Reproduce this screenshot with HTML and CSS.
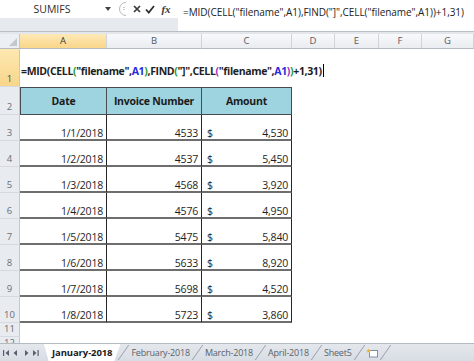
FILE: index.html
```html
<!DOCTYPE html>
<html lang="en">
<head>
    <meta charset="UTF-8">
    <title>January-2018 - Invoices</title>
    <link rel="stylesheet" href="styles.css">
</head>
<body>
<div class="app">

    <!-- formula bar -->
    <div class="formula-bar">
        <div class="fb-left">
            <div class="fb-top">
                <span class="name">SUMIFS</span>
                <svg class="dd" width="6" height="4" viewBox="0 0 6 4"><path d="M0 0H6L3 4Z" fill="#444"/></svg>
                <svg class="grip" width="9" height="16" viewBox="0 0 9 16"><path d="M8 1.5A6.5 6.5 0 0 0 8 14.5" fill="none" stroke="#b3b9c1"/><path d="M5 6.5H7M5 8.5H7" stroke="#c6cbd2"/></svg>
                <svg class="btn-x" width="8" height="8" viewBox="0 0 8 8"><path d="M1 1L7 7M7 1L1 7" stroke="#3a3a3a" stroke-width="1.7"/></svg>
                <svg class="btn-ok" width="10" height="9" viewBox="0 0 10 9"><path d="M1 4.5L3.8 7.5L9 1" fill="none" stroke="#2f2f2f" stroke-width="1.8"/></svg>
                <span class="fx">fx</span>
            </div>
        </div>
        <div class="fb-input">=MID(CELL("filename",A1),FIND("]",CELL("filename",A1))+1,31)</div>
    </div>
    <div class="bar-gap"></div>

    <!-- grid -->
    <div class="sheet">
        <div class="row hdr">
            <div class="corner"><svg width="8" height="8" viewBox="0 0 8 8"><path d="M8 0V8H0Z" fill="#c3c8cf"/></svg></div>
            <div class="ch sel">A</div>
            <div class="ch">B</div>
            <div class="ch">C</div>
            <div class="ch">D</div>
            <div class="ch">E</div>
            <div class="ch">F</div>
            <div class="ch">G</div>
        </div>

        <div class="row r1">
            <div class="rh sel">1</div>
            <div class="edit">=MID(CELL<span class="p2">(</span>"filename",<span class="ref">A1</span><span class="p2">)</span>,FIND<span class="p2">(</span>"]",CELL<span class="p3">(</span>"filename",<span class="ref">A1</span><span class="p3">)</span><span class="p2">)</span>+1,31)<span class="caret"></span></div>
        </div>

        <div class="row r2">
            <div class="rh">2</div>
            <div class="th">Date</div>
            <div class="th">Invoice Number</div>
            <div class="th">Amount</div>
        </div>

        <div class="row data">
            <div class="rh">3</div>
            <div class="td">1/1/2018</div>
            <div class="td">4533</div>
            <div class="td money"><span>$</span><span>4,530</span></div>
        </div>
        <div class="row data">
            <div class="rh">4</div>
            <div class="td">1/2/2018</div>
            <div class="td">4537</div>
            <div class="td money"><span>$</span><span>5,450</span></div>
        </div>
        <div class="row data">
            <div class="rh">5</div>
            <div class="td">1/3/2018</div>
            <div class="td">4568</div>
            <div class="td money"><span>$</span><span>3,920</span></div>
        </div>
        <div class="row data">
            <div class="rh">6</div>
            <div class="td">1/4/2018</div>
            <div class="td">4576</div>
            <div class="td money"><span>$</span><span>4,950</span></div>
        </div>
        <div class="row data">
            <div class="rh">7</div>
            <div class="td">1/5/2018</div>
            <div class="td">5475</div>
            <div class="td money"><span>$</span><span>5,840</span></div>
        </div>
        <div class="row data">
            <div class="rh">8</div>
            <div class="td">1/6/2018</div>
            <div class="td">5633</div>
            <div class="td money"><span>$</span><span>8,920</span></div>
        </div>
        <div class="row data">
            <div class="rh">9</div>
            <div class="td">1/7/2018</div>
            <div class="td">5698</div>
            <div class="td money"><span>$</span><span>4,520</span></div>
        </div>
        <div class="row data">
            <div class="rh">10</div>
            <div class="td">1/8/2018</div>
            <div class="td">5723</div>
            <div class="td money"><span>$</span><span>3,860</span></div>
        </div>

        <div class="row r11"><div class="rh">11</div></div>
        <div class="row r12"><div class="rh">12</div></div>
    </div>

    <!-- sheet tabs -->
    <div class="tabs">
        <svg class="nav" width="44" height="10" viewBox="0 0 44 10">
            <g fill="#56606c">
                <rect x="3" y="2" width="1.2" height="6"/><path d="M9 2V8L5.5 5Z"/>
                <path d="M17 2V8L13.5 5Z"/>
                <path d="M25 2V8L28.5 5Z"/>
                <path d="M33 2V8L36.5 5Z"/><rect x="37.5" y="2" width="1.2" height="6"/>
            </g>
        </svg>
        <span class="tab active">January-2018</span>
        <span class="sep"></span>
        <span class="tab">February-2018</span>
        <span class="sep"></span>
        <span class="tab">March-2018</span>
        <span class="sep"></span>
        <span class="tab">April-2018</span>
        <span class="sep"></span>
        <span class="tab">Sheet5</span>
        <span class="sep"></span>
        <span class="tab new">
            <svg width="13" height="10" viewBox="0 0 13 10"><rect x="3.5" y="2.5" width="8" height="6.5" fill="#fff" stroke="#7d8fa6"/><path d="M2.5 0.5L3.2 2L4.8 2.2L3.6 3.2L4 4.8L2.5 4L1 4.8L1.4 3.2L0.2 2.2L1.8 2Z" fill="#f2b33d"/></svg>
        </span>
        <span class="sep"></span>
    </div>

</div>
</body>
</html>
```

FILE: styles.css
```css
* { box-sizing: border-box; }

body {
    margin: 0;
    background: #ffffff;
    font-family: "Open Sans", "Noto Sans", sans-serif;
    color: #1e1e1e;
}

.app {
    width: 474px;
    height: 361px;
    display: flex;
    flex-direction: column;
    overflow: hidden;
}

/* ---------- formula bar ---------- */
.formula-bar { display: flex; height: 32px; flex-shrink: 0; border-bottom: 1px solid #b9bfc7; }
.fb-left { width: 178px; flex-shrink: 0; background: #e6e9ed; }
.fb-top {
    height: 18px;
    background: #ffffff;
    display: grid;
    grid-template-columns: 104px 8px 20px 10px 16px 16px;
    align-items: center;
    justify-items: center;
}
.fb-top .name { font-size: 10.5px; color: #2e2e2e; }
.fx { font-family: "Liberation Serif", serif; font-style: italic; font-weight: bold; font-size: 11px; color: #3a3a3a; }
.fb-input {
    flex: 1;
    background: #ffffff;
    font-size: 10px;
    line-height: 14px;
    letter-spacing: -0.05px;
    padding: 5px 0 0 5px;
    color: #222;
    white-space: nowrap;
    overflow: hidden;
}
.bar-gap { height: 2px; background: #e3e6ea; flex-shrink: 0; }

/* ---------- grid ---------- */
.sheet { flex: 1; overflow: hidden; }
.row {
    display: grid;
    grid-template-columns: 20px 87px 95px 90px 43px 44px 43px 1fr;
}
.rh {
    background: #e8ebef;
    border-right: 1px solid #c3c8cf;
    border-bottom: 1px solid #d6dae0;
    color: #6a6f76;
    font-size: 9.5px;
    line-height: 11px;
    display: flex;
    align-items: flex-end;
    justify-content: center;
    padding-bottom: 2px;
}
.rh.sel { background: linear-gradient(#fde8b2, #f8d68a); color: #4a4a4a; }

.hdr { height: 15px; }
.corner { background: #eceff3; border-right: 1px solid #c3c8cf; border-bottom: 1px solid #b5bac1; display: flex; align-items: flex-end; justify-content: flex-end; padding: 0 2px 2px 0; }
.ch {
    background: linear-gradient(#f8f9fb, #e9ecf0);
    border-right: 1px solid #d0d4da;
    border-bottom: 1px solid #b5bac1;
    font-size: 9.5px;
    color: #555b63;
    text-align: center;
    line-height: 14px;
}
.ch.sel { background: linear-gradient(#fde9b6, #f9d68a); color: #3c3c3c; }

.r1 { height: 38px; }
.edit {
    grid-column: 2 / -1;
    font-weight: bold;
    font-size: 10.5px;
    letter-spacing: -0.35px;
    white-space: nowrap;
    display: flex;
    align-items: center;
    padding: 5px 0 0 1px;
}
.edit .ref { color: #2a2ae0; }
.edit .p2 { color: #1f9a2a; }
.edit .p3 { color: #9a2fc0; }
.caret { display: inline-block; width: 1px; height: 13px; background: #000; margin-left: 1px; }

.r2 { height: 28px; }
.th {
    background: #9ed3e0;
    border: 1px solid #474b4f;
    border-left: none;
    font-weight: bold;
    font-size: 10.5px;
    letter-spacing: -0.25px;
    color: #1b1b1b;
    display: flex;
    align-items: center;
    justify-content: center;
}
.r2 .th:nth-child(2) { border-left: 1px solid #474b4f; }

.data { height: 26px; }
.td {
    border-right: 1px solid #262626;
    border-bottom: 2px solid #6e6e6e;
    font-size: 10.5px;
    line-height: 11px;
    letter-spacing: -0.2px;
    display: flex;
    align-items: flex-end;
    justify-content: flex-end;
    padding: 0 3px 0 0;
}
.td.money { justify-content: space-between; padding-left: 5px; }

.r11 { height: 14px; }
.r12 { height: 14px; }

/* ---------- sheet tabs ---------- */
.tabs {
    height: 18px;
    flex-shrink: 0;
    display: flex;
    align-items: center;
    background: linear-gradient(#e4e8ed, #d8dde4);
    border-top: 1px solid #b4bac3;
    font-size: 9px;
    letter-spacing: -0.2px;
    color: #5a616a;
}
.nav { flex-shrink: 0; }
.tab { padding: 0 4px; white-space: nowrap; line-height: 17px; }
.tab.active {
    background: #ffffff;
    color: #1a1a1a;
    font-weight: bold;
    font-size: 9.5px;
    letter-spacing: -0.1px;
    padding: 0 8px 0 8px;
    clip-path: polygon(0 0, 100% 0, 92% 100%, 6% 100%);
}
.tab.new { display: flex; align-items: center; padding: 0 3px; }
.sep {
    width: 1px;
    height: 15px;
    background: #97a0ab;
    transform: skewX(-35deg);
    margin: 0 3px;
    flex-shrink: 0;
}
```
